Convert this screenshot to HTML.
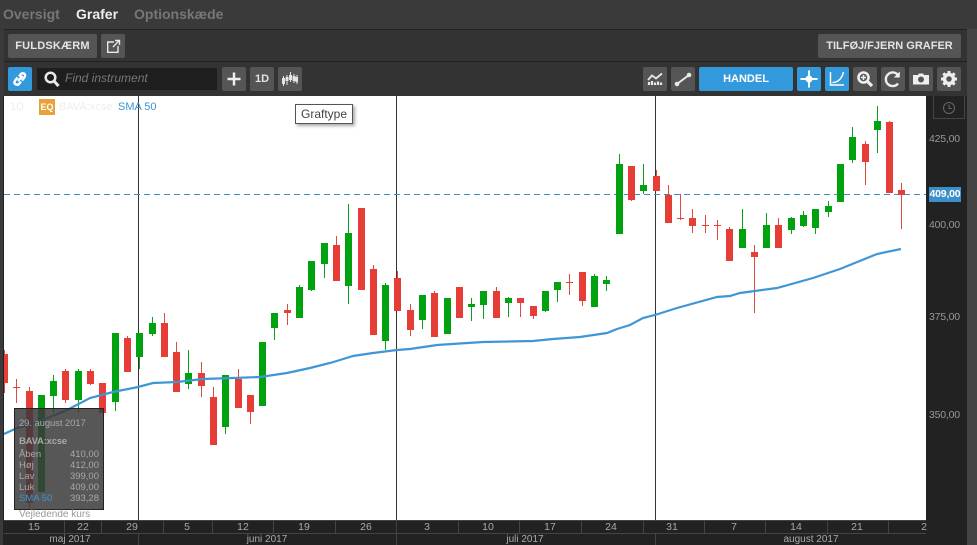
<!DOCTYPE html>
<html><head><meta charset="utf-8"><style>
html,body{margin:0;padding:0;width:977px;height:545px;overflow:hidden;background:#3a3a3a;font-family:"Liberation Sans",sans-serif}
.a{position:absolute}
#tabs span{position:absolute;top:6px;font:bold 14px "Liberation Sans",sans-serif;color:#777;white-space:nowrap}
.btn{position:absolute;background:#555;border-radius:2px;color:#e4e4e4;font:bold 11px "Liberation Sans",sans-serif;text-align:center;height:24px;line-height:24px;top:67px;width:24px;white-space:nowrap}
.blue{background:#3399dd;color:#fff}
.btn svg{position:absolute;left:0;top:0}
.yl{position:absolute;left:929px;font:10.5px "Liberation Sans",sans-serif;letter-spacing:-.2px;color:#999;white-space:nowrap}
.xl,.ml{position:absolute;font:10.5px "Liberation Sans",sans-serif;color:#aaa;white-space:nowrap;transform:translateX(-50%)}
.xl{top:521px}.ml{top:534px;font-size:10px}
.sep{position:absolute;width:1px;background:#444}
.r{position:absolute;left:4px;width:80px;font:9.5px "Liberation Sans",sans-serif;color:#a8a8a8;display:flex;justify-content:space-between;height:11px;line-height:11px}
</style></head><body>
<div id="tabs"><span style="left:3px">Oversigt</span><span style="left:76px;color:#eee">Grafer</span><span style="left:134px">Optionskæde</span></div>
<div class="a" style="left:3px;top:29px;width:964px;height:33px;background:#333;border-top:1px solid #222;box-sizing:border-box;border-bottom:1px solid #222"></div>
<div class="a" style="left:3px;top:62px;width:964px;height:34px;background:#333"></div>
<div class="a" style="left:0;top:29px;width:3px;height:516px;background:#3a3a3a"></div>
<div class="a" style="left:3px;top:29px;width:1px;height:516px;background:#222"></div>
<div class="btn" style="left:8px;top:34px;width:89px;letter-spacing:.2px">FULDSKÆRM</div>
<div class="btn" style="left:101px;top:34px"><svg width="24" height="24" fill="none" stroke="#e8e8e8" stroke-width="1.4"><path d="M13 8H6.700V18.300H17V12"/><path d="M12 13L18 6.700M14 6.500H18.500V11"/></svg></div>
<div class="btn" style="left:818px;top:34px;width:143px">TILFØJ/FJERN GRAFER</div>
<div class="btn blue" style="left:8px"><svg width="24" height="24" fill="none" stroke="#fff" stroke-width="2.400"><path d="M11 9.500l2-2.500c1.500-1.500 4-.5 4 1 .5 1-.5 2-1 3l-2 2.500M13 14.500l-2 2.500c-1.500 1.500-4 .5-4.500-1-.5-1 .5-2 1-3l2-2.500M10 14l4.500-5"/></svg></div>
<div class="a" style="left:37px;top:68px;width:180px;height:22px;background:#1e1e1e"></div>
<svg class="a" style="left:44px;top:71px" width="18" height="18" fill="none" stroke="#e8e8e8"><circle cx="6.500" cy="6.500" r="4.800" stroke-width="2.500"/><path d="M10 10L14.500 15" stroke-width="3"/></svg>
<div class="a" style="left:65px;top:71px;font:italic 12px 'Liberation Sans',sans-serif;color:#777;white-space:nowrap">Find instrument</div>
<div class="btn" style="left:222px"><svg width="24" height="24"><path d="M12 5.500V18.500M5.500 12H18.500" stroke="#eee" stroke-width="2.500"/></svg></div>
<div class="btn" style="left:250px">1D</div>
<div class="btn" style="left:278px"><svg width="24" height="24" fill="#e4e4e4" stroke="#e4e4e4"><path d="M5.500 9V19M9 8V18M12.500 5V15M16 7V16M19 8V17" fill="none" stroke-width="1"/><rect x="4" y="11" width="3" height="6" stroke="none"/><rect x="7.500" y="10" width="3" height="4" stroke="none"/><rect x="11" y="8" width="3" height="5" stroke="none"/><rect x="14.500" y="9" width="3" height="5" stroke="none"/><rect x="17.500" y="10" width="2.500" height="5" stroke="none"/></svg></div>
<div class="btn" style="left:643px"><svg width="24" height="24" fill="none" stroke="#e8e8e8"><path d="M5 13L9 8.500L13 11.500L19 6.500" stroke-width="1.800"/><path d="M6 18V15M9 18V14M12 18V15.500M15 18V14.500M18 18V15.500" stroke-width="2.200"/></svg></div>
<div class="btn" style="left:671px"><svg width="24" height="24" fill="#e8e8e8" stroke="#e8e8e8"><path d="M6 17L18 8" stroke-width="2"/><circle cx="6" cy="17" r="1.800"/><circle cx="18" cy="8" r="1.800"/></svg></div>
<div class="btn blue" style="left:699px;width:94px">HANDEL</div>
<div class="btn blue" style="left:797px"><svg width="24" height="24" fill="#fff"><path d="M12 3.500V20.500M3.500 12H20.500" stroke="#fff" stroke-width="2"/><circle cx="12" cy="12" r="3.500"/></svg></div>
<div class="btn blue" style="left:825px"><svg width="24" height="24" fill="none" stroke="#fff" stroke-width="1.500"><path d="M5.500 5V18H19"/><path d="M7.500 15.500C13 15.500 17 11.500 18.500 5"/></svg></div>
<div class="btn" style="left:853px"><svg width="24" height="24" fill="none" stroke="#eee"><circle cx="10.500" cy="10.500" r="5" stroke-width="2.600"/><path d="M14.500 14.500L19 19" stroke-width="3.200"/><path d="M8 10.500H13M10.500 8V13" stroke-width="1.500"/></svg></div>
<div class="btn" style="left:881px"><svg width="24" height="24" fill="none" stroke="#eee" stroke-width="2.400"><path d="M17 16.500A6.800 6.800 0 1 1 16.500 7.500"/><path d="M18.800 4.500V10.500H12.800Z" fill="#eee" stroke="none"/></svg></div>
<div class="btn" style="left:909px"><svg width="24" height="24"><path d="M4 8H9L10 6.500H14L15 8H20V17.500H4Z" fill="#eee"/><circle cx="12" cy="12.500" r="3" fill="#555"/></svg></div>
<div class="btn" style="left:937px"><svg width="24" height="24" fill="none" stroke="#eee"><circle cx="12" cy="12" r="4.500" stroke-width="3.500"/><path d="M12 4V20M4 12H20M6.300 6.300L17.700 17.700M17.700 6.300L6.300 17.700" stroke-width="3" stroke-dasharray="3 10 3 10"/></svg></div>

<div class="a" style="left:4px;top:96px;width:922px;height:424px;background:#fff;overflow:hidden"></div>
<svg class="a" style="left:0;top:0" width="977" height="545" shape-rendering="crispEdges">
<path d="M138.500 96V520M396.500 96V520M655.500 96V520" stroke="#333" stroke-width="1" fill="none"/>
<path d="M4 194.500H926" stroke="#3e8fc0" stroke-width="1" stroke-dasharray="6 4" fill="none"/>
<path stroke="#dc4a42" stroke-width="1" fill="none" d="M4.500 350V393M16.500 379V403M29.500 387V508M65.500 369V403M90.500 369V385M102.500 383V413M127.500 336V372M164.500 313V357M176.500 342V392M201.500 362V397M213.500 387V445M238.500 369V408M250.500 395V424M287.500 304V325M336.500 236V281M361.500 208V290M373.500 265V335M397.500 271V311M410.500 304V336M434.500 291V337M459.500 287V318M496.500 287V318M520.500 298V317M533.500 306V319M569.500 274V295M582.500 272V306M631.500 166V201M656.500 170V191M668.500 185V223M680.500 194V220M692.500 209V233M705.500 215V233M717.500 220V240M729.500 227V261M754.500 245V313M778.500 218V248M865.500 141V185M889.500 121V193M901.500 183V229"/>
<path stroke="#e63e36" stroke-width="7" fill="none" d="M4.500 354V383M16.500 387V388M29.500 391V503M65.500 371V400M90.500 371V384M102.500 383V413M127.500 338V372M164.500 323V357M176.500 352V392M201.500 373V386M213.500 397V445M238.500 379V408M250.500 395V412M287.500 310V313M336.500 245V281M361.500 208V290M373.500 269V335M397.500 278V311M410.500 310V330M434.500 293V337M459.500 287V318M496.500 291V318M520.500 298V303M533.500 306V316M569.500 282V283M582.500 272V301M631.500 166V200M656.500 176V191M668.500 195V223M680.500 218V219M692.500 218V226M705.500 225V226M717.500 225V226M729.500 229V261M754.500 252V257M778.500 225V248M865.500 144V162M889.500 122V193M901.500 190V195"/>
<path stroke="#0d9f1a" stroke-width="1" fill="none" d="M41.500 395V492M53.500 375V413M78.500 369V413M115.500 333V411M139.500 333V369M152.500 317V336M188.500 350V389M225.500 375V434M262.500 342V406M274.500 313V340M299.500 285V318M311.500 261V291M324.500 243V278M348.500 204V304M385.500 283V350M422.500 295V329M447.500 298V334M471.500 298V321M483.500 291V319M508.500 297V317M545.500 291V312M557.500 282V302M594.500 274V307M606.500 276V291M619.500 154V234M643.500 164V194M742.500 209V248M766.500 213V248M791.500 217V234M803.500 211V227M815.500 209V234M828.500 201V217M840.500 164V202M852.500 127V163M877.500 106V153"/>
<path stroke="#00a30f" stroke-width="7" fill="none" d="M41.500 395V492M53.500 381V396M78.500 371V400M115.500 333V402M139.500 333V357M152.500 323V334M188.500 373V384M225.500 375V427M262.500 342V406M274.500 313V328M299.500 287V318M311.500 261V290M324.500 243V264M348.500 233V286M385.500 285V341M422.500 295V320M447.500 298V334M471.500 304V307M483.500 291V305M508.500 298V303M545.500 291V311M557.500 282V290M594.500 276V307M606.500 280V284M619.500 164V234M643.500 185V191M742.500 229V248M766.500 225V248M791.500 218V230M803.500 215V226M815.500 209V228M828.500 206V212M840.500 164V202M852.500 137V160M877.500 121V130"/>
<path shape-rendering="geometricPrecision" stroke="#3f96d4" stroke-width="2.200" fill="none" d="M4 434L17 428L33 424L67 410L90 398L113 392L138 387L153 383L177 382L203 379L233 378L260 377L287 373L310 368L330 363L340 360L353 356L373 353L397 350L410 349L437 345L483 342L533 341L553 339L580 337L607 333L617 329L630 325L643 318L655 315L677 308L717 297L730 296L740 293L777 288L813 278L840 269L877 254L901 249"/>
</svg>
<div class="a" style="left:0;top:29px;width:4px;height:516px;background:#3a3a3a;border-right:0"></div>
<div class="a" style="left:3px;top:96px;width:1px;height:449px;background:#222"></div>

<div class="a" style="left:10px;top:101px;font:11px 'Liberation Sans',sans-serif;color:#eee">1D</div>
<div class="a" style="left:39px;top:99px;width:16px;height:16px;background:#e8a23a;color:#fff;font:bold 9px/16px 'Liberation Sans',sans-serif;text-align:center">EQ</div>
<div class="a" style="left:59px;top:101px;font:11px 'Liberation Sans',sans-serif;color:#eee">BAVA:xcse</div>
<div class="a" style="left:118px;top:101px;font:11px 'Liberation Sans',sans-serif;color:#3d93cf">SMA 50</div>

<div class="a" style="left:295px;top:104px;width:58px;height:20px;box-sizing:border-box;background:#fff;border:1px solid #555;box-shadow:2px 2px 3px #aaa;font:12px/18px 'Liberation Sans',sans-serif;color:#444;text-align:center">Graftype</div>

<div class="a" style="left:14px;top:408px;width:90px;height:102px;box-sizing:border-box;background:rgba(58,58,58,.85);border:1px solid #222">
<div class="a" style="left:4px;top:9px;font:9.5px 'Liberation Sans',sans-serif;letter-spacing:-.1px;color:#a8a8a8;white-space:nowrap">29. august 2017</div>
<div class="a" style="left:4px;top:27px;font:bold 9.5px 'Liberation Sans',sans-serif;letter-spacing:-.2px;color:#a8a8a8;white-space:nowrap">BAVA:xcse</div>
<div class="r" style="top:40px"><span>Åben</span><span>410,00</span></div>
<div class="r" style="top:51px"><span>Høj</span><span>412,00</span></div>
<div class="r" style="top:62px"><span>Lav</span><span>399,00</span></div>
<div class="r" style="top:73px"><span>Luk</span><span>409,00</span></div>
<div class="r" style="top:84px"><span style="color:#3d93cf">SMA 50</span><span>393,28</span></div>
</div>
<div class="a" style="left:19px;top:509px;font:10px 'Liberation Sans',sans-serif;color:#999;white-space:nowrap">Vejledende kurs</div>

<div class="a" style="left:926px;top:96px;width:41px;height:449px;background:#222"></div>
<div class="a" style="left:967px;top:29px;width:10px;height:516px;background:#444"></div>
<div class="a" style="left:933px;top:96px;width:32px;height:23px;box-sizing:border-box;border:1px solid #444;border-top:0"></div>
<svg class="a" style="left:941px;top:100px" width="16" height="16" fill="none" stroke="#666"><circle cx="8" cy="8" r="5.500"/><path d="M8 4.500V8.500H11"/></svg>
<div class="yl" style="top:133px">425,00</div>
<div class="yl" style="top:219px">400,00</div>
<div class="yl" style="top:311px">375,00</div>
<div class="yl" style="top:409px">350,00</div>
<div class="a" style="left:929px;top:187px;width:32px;height:15px;background:#3d8fc9;color:#fff;font:bold 10.5px/15px 'Liberation Sans',sans-serif;letter-spacing:-.2px;text-align:center">409,00</div>

<div class="a" style="left:4px;top:520px;width:922px;height:25px;background:#222;overflow:hidden"></div>
<div class="a" style="left:4px;top:520px;width:922px;height:1px;background:#444"></div>
<div class="a" style="left:4px;top:533px;width:922px;height:1px;background:#444"></div>
<div class="sep" style="left:64px;top:520px;height:13px"></div><div class="sep" style="left:101px;top:520px;height:13px"></div><div class="sep" style="left:163px;top:520px;height:13px"></div><div class="sep" style="left:212px;top:520px;height:13px"></div><div class="sep" style="left:273px;top:520px;height:13px"></div><div class="sep" style="left:335px;top:520px;height:13px"></div><div class="sep" style="left:396px;top:520px;height:13px"></div><div class="sep" style="left:458px;top:520px;height:13px"></div><div class="sep" style="left:519px;top:520px;height:13px"></div><div class="sep" style="left:581px;top:520px;height:13px"></div><div class="sep" style="left:643px;top:520px;height:13px"></div><div class="sep" style="left:704px;top:520px;height:13px"></div><div class="sep" style="left:765px;top:520px;height:13px"></div><div class="sep" style="left:827px;top:520px;height:13px"></div><div class="sep" style="left:888px;top:520px;height:13px"></div>
<div class="sep" style="left:138px;top:533px;height:12px"></div><div class="sep" style="left:396px;top:533px;height:12px"></div><div class="sep" style="left:655px;top:533px;height:12px"></div>
<div class="xl" style="left:34px">15</div><div class="xl" style="left:83px">22</div><div class="xl" style="left:132px">29</div><div class="xl" style="left:187px">5</div><div class="xl" style="left:243px">12</div><div class="xl" style="left:304px">19</div><div class="xl" style="left:366px">26</div><div class="xl" style="left:427px">3</div><div class="xl" style="left:488px">10</div><div class="xl" style="left:550px">17</div><div class="xl" style="left:611px">24</div><div class="xl" style="left:672px">31</div><div class="xl" style="left:734px">7</div><div class="xl" style="left:796px">14</div><div class="xl" style="left:857px">21</div><div class="xl" style="left:924px">2</div>
<div class="ml" style="left:70px">maj 2017</div><div class="ml" style="left:267px">juni 2017</div><div class="ml" style="left:525px">juli 2017</div><div class="ml" style="left:811px">august 2017</div>
</body></html>
